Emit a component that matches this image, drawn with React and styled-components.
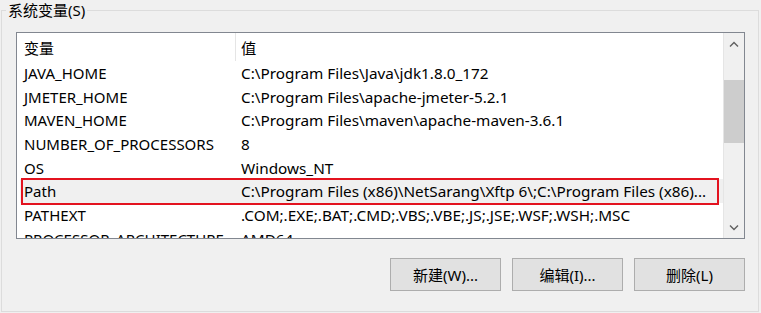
import React from "react";
import styled, { createGlobalStyle } from "styled-components";

const GlobalStyle = createGlobalStyle`
  html, body {
    margin: 0;
    padding: 0;
    background: #f0f0f0;
  }
  body {
    font-family: "Noto Sans", "Noto Sans CJK SC", sans-serif;
    font-size: 15px;
    color: #000;
  }
`;

const rows = [
  ["JAVA_HOME", "C:\\Program Files\\Java\\jdk1.8.0_172"],
  ["JMETER_HOME", "C:\\Program Files\\apache-jmeter-5.2.1"],
  ["MAVEN_HOME", "C:\\Program Files\\maven\\apache-maven-3.6.1"],
  ["NUMBER_OF_PROCESSORS", "8"],
  ["OS", "Windows_NT"],
  ["Path", "C:\\Program Files (x86)\\NetSarang\\Xftp 6\\;C:\\Program Files (x86)..."],
  ["PATHEXT", ".COM;.EXE;.BAT;.CMD;.VBS;.VBE;.JS;.JSE;.WSF;.WSH;.MSC"],
  ["PROCESSOR_ARCHITECTURE", "AMD64"],
];

export default function App() {
  return (
    <>
      <GlobalStyle />
      <Group>
        <Legend>系统变量(S)</Legend>
        <ListBox>
          <Rows>
            <Header>
              <NameCell>变量</NameCell>
              <ValueCell $head>值</ValueCell>
            </Header>
            {rows.map(([name, value]) => (
              <Row key={name} $selected={name === "Path"}>
                <NameCell>{name}</NameCell>
                <ValueCell>{value}</ValueCell>
                {name === "Path" && <Highlight />}
              </Row>
            ))}
          </Rows>
          <ScrollBar>
            <Arrow>
              <svg width="10" height="6" viewBox="0 0 10 6">
                <path d="M1 5.5 L5 1.5 L9 5.5" fill="none" stroke="#606060" strokeWidth="1.4" />
              </svg>
            </Arrow>
            <Track>
              <Thumb />
            </Track>
            <Arrow>
              <svg width="10" height="6" viewBox="0 0 10 6">
                <path d="M1 0.5 L5 4.5 L9 0.5" fill="none" stroke="#606060" strokeWidth="1.4" />
              </svg>
            </Arrow>
          </ScrollBar>
        </ListBox>
        <Buttons>
          <Button>新建(W)...</Button>
          <Button>编辑(I)...</Button>
          <Button>删除(L)</Button>
        </Buttons>
      </Group>
    </>
  );
}

const Group = styled.div`
  position: relative;
  margin: 10px 2px 0 1px;
  border: 1px solid #dcdcdc;
  padding: 21px 15px 0 14px;
  box-sizing: border-box;
  height: 302px;
`;

const Legend = styled.div`
  position: absolute;
  top: -11px;
  left: 4px;
  padding: 0 2px 0 2px;
  background: #f0f0f0;
  line-height: 20px;
  white-space: nowrap;
`;

const ListBox = styled.div`
  display: flex;
  width: 729px;
  height: 207px;
  border: 1px solid #828790;
  box-sizing: border-box;
  background: #fff;
  overflow: hidden;
`;

const Rows = styled.div`
  flex: 1;
  display: flex;
  flex-direction: column;
  overflow: hidden;
  border-right: 1px solid #e5e5e5;
`;

const Header = styled.div`
  display: flex;
  flex: none;
  height: 28px;
  align-items: center;
`;

const Row = styled.div`
  position: relative;
  display: flex;
  flex: none;
  height: 23.7px;
  align-items: center;
  background: ${(p) =>
    p.$selected ? "linear-gradient(to right, #fff 3px, #f0f0f0 3px)" : "transparent"};
`;

const NameCell = styled.div`
  width: 218px;
  flex: none;
  padding-left: 7px;
  box-sizing: border-box;
  white-space: nowrap;
`;

const ValueCell = styled.div`
  flex: 1;
  align-self: stretch;
  display: flex;
  align-items: center;
  padding-left: 5px;
  font-size: 15.3px;
  white-space: nowrap;
  overflow: hidden;
  border-left: 1px solid ${(p) => (p.$head ? "#e5e5e5" : "transparent")};
`;

const Highlight = styled.div`
  position: absolute;
  left: 4px;
  right: 4px;
  top: -1px;
  bottom: -2px;
  border: 2px solid #e3131f;
  pointer-events: none;
`;

const ScrollBar = styled.div`
  width: 20px;
  flex: none;
  display: flex;
  flex-direction: column;
  background: #f0f0f0;
`;

const Arrow = styled.div`
  height: 21px;
  flex: none;
  display: flex;
  align-items: center;
  justify-content: center;
`;

const Track = styled.div`
  flex: 1;
  padding-top: 26px;
`;

const Thumb = styled.div`
  height: 63px;
  background: #cdcdcd;
`;

const Buttons = styled.div`
  display: flex;
  justify-content: flex-end;
  gap: 11px;
  width: 729px;
  margin-top: 19px;
`;

const Button = styled.button`
  width: 111px;
  height: 33px;
  background: #e1e1e1;
  border: 1px solid #adadad;
  font-family: "Noto Sans", "Noto Sans CJK SC", sans-serif;
  font-size: 15px;
  color: #000;
  padding: 0;
`;
